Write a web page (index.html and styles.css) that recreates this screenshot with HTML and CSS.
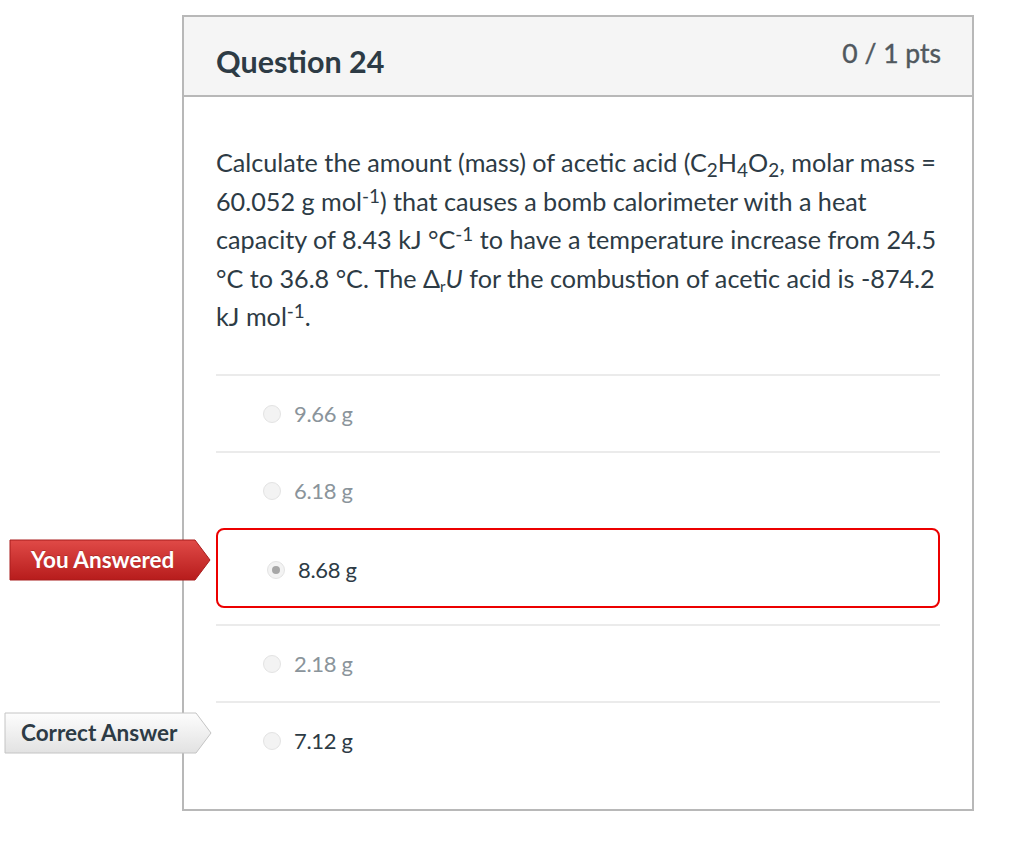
FILE: index.html
```html
<!DOCTYPE html>
<html>
<head>
<meta charset="utf-8">
<link rel="stylesheet" href="styles.css">
</head>
<body>
<div class="card">
  <div class="card-header">
    <h2 class="title">Question 24</h2>
    <div class="pts">0 / 1 pts</div>
  </div>
  <div class="card-body">
    <p class="question">Calculate the amount (mass) of acetic acid (C<sub>2</sub>H<sub>4</sub>O<sub>2</sub>, molar mass = 60.052 g mol<sup>-1</sup>) that causes a bomb calorimeter with a heat capacity of 8.43 kJ °C<sup>-1</sup> to have a temperature increase from 24.5 °C to 36.8 °C. The Δ<sub class="r">r</sub><i>U</i> for the combustion of acetic acid is -874.2 kJ mol<sup>-1</sup>.</p>
    <div class="answers">
      <div class="answer muted"><span class="radio"></span><span class="atext">9.66 g</span></div>
      <div class="answer muted"><span class="radio"></span><span class="atext">6.18 g</span></div>
      <div class="answer selected wrong">
        <div class="flag flag-wrong">
          <svg class="flag-shape" width="202" height="42" viewBox="0 0 202 42">
            <defs>
              <linearGradient id="gr" x1="0" y1="0" x2="0" y2="1">
                <stop offset="0" stop-color="#e04a47"/>
                <stop offset="1" stop-color="#b71c1c"/>
              </linearGradient>
            </defs>
            <polygon points="1,1 186,1 201,21 186,41 1,41" fill="url(#gr)" stroke="#a81c1c" stroke-width="1"/>
          </svg>
          <span class="flag-text">You Answered</span>
        </div>
        <span class="radio checked"></span><span class="atext">8.68 g</span>
      </div>
      <div class="answer muted"><span class="radio"></span><span class="atext">2.18 g</span></div>
      <div class="answer correct">
        <div class="flag flag-correct">
          <svg class="flag-shape" width="208" height="42" viewBox="0 0 208 42">
            <defs>
              <linearGradient id="gg" x1="0" y1="0" x2="0" y2="1">
                <stop offset="0" stop-color="#fdfdfd"/>
                <stop offset="1" stop-color="#e2e2e2"/>
              </linearGradient>
            </defs>
            <polygon points="1,1 192,1 207,21 192,41 1,41" fill="url(#gg)" stroke="#c4c4c4" stroke-width="1"/>
          </svg>
          <span class="flag-text">Correct Answer</span>
        </div>
        <span class="radio"></span><span class="atext">7.12 g</span>
      </div>
    </div>
  </div>
</div>
</body>
</html>
```
FILE: styles.css
```css
html, body {
  margin: 0;
  padding: 0;
  background: #ffffff;
}
body {
  font-family: Lato, "Open Sans", sans-serif;
  color: #2d3b45;
}
.card {
  margin: 15px 0 0 182px;
  width: 788px;
  border: 2px solid #b8b8b8;
  background: #fff;
}
.card-header {
  height: 78px;
  background: #f5f5f5;
  border-bottom: 2px solid #b8b8b8;
  display: flex;
  justify-content: space-between;
  align-items: flex-start;
  padding: 0 31px 0 32px;
}
.title {
  margin: 27px 0 0 0;
  font-size: 30.5px;
  line-height: 34px;
  font-weight: 700;
  color: #2d3b45;
}
.pts {
  margin-top: 19px;
  font-size: 26.5px;
  line-height: 34px;
  font-weight: 400;
  color: #50585e;
  -webkit-text-stroke: 0.4px #50585e;
}
.card-body {
  padding: 46px 32px 31px 32px;
}
.question {
  margin: 0;
  font-size: 25.2px;
  line-height: 38.5px;
  color: #2d3b45;
}
.question sub, .question sup {
  font-size: 0.75em;
  line-height: 0;
}
.question sub {
  vertical-align: -0.25em;
}
.question sub.r {
  font-size: 0.6em;
}
.question sup {
  vertical-align: 0.45em;
}
.answers {
  margin-top: 38px;
}
.answer {
  position: relative;
  height: 77px;
  border-top: 2px solid #ebebeb;
  display: flex;
  align-items: center;
  padding-left: 47px;
  padding-top: 2px;
  box-sizing: border-box;
}
.answer.selected {
  height: 80px;
  border: 2px solid #ec0000;
  border-radius: 8px;
  padding-left: 49px;
  padding-top: 4px;
  margin-bottom: 16px;
}
.radio {
  width: 18px;
  height: 18px;
  border-radius: 50%;
  background: #f3f3f3;
  border: 1px solid #e3e3e3;
  box-sizing: border-box;
  margin-right: 13px;
  position: relative;
  flex: none;
}
.radio.checked::after {
  content: "";
  position: absolute;
  left: 4px;
  top: 4px;
  width: 8px;
  height: 8px;
  border-radius: 50%;
  background: #a7a7a7;
}
.atext {
  font-size: 22px;
  line-height: 28px;
  letter-spacing: -0.3px;
}
.answer.muted .atext {
  color: #8a949b;
}
.answer.selected .atext,
.answer.correct .atext {
  color: #2d3b45;
}
.flag {
  position: absolute;
  height: 42px;
  display: flex;
  align-items: center;
}
.flag-shape {
  position: absolute;
  left: 0;
  top: 0;
}
.flag-text {
  position: relative;
  font-size: 22.5px;
  font-weight: 700;
}
.flag-wrong {
  left: -209px;
  top: 9px;
  width: 202px;
}
.flag-wrong .flag-text {
  color: #fff;
  margin-left: 22px;
  text-shadow: 0 -1px 0 rgba(0,0,0,0.2);
}
.flag-correct {
  left: -212px;
  top: 9px;
  width: 208px;
}
.flag-correct .flag-text {
  color: #2d3b45;
  margin-left: 17px;
}
```
